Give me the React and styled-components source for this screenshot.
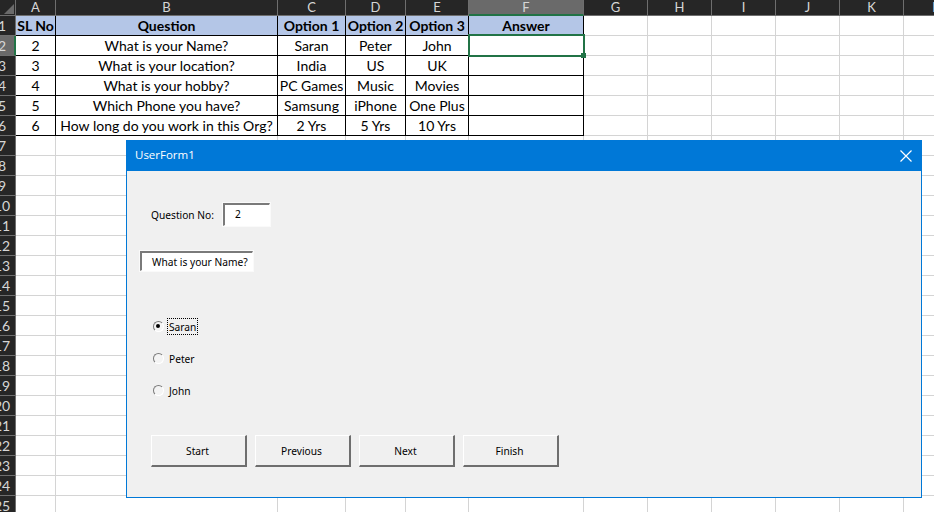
import styled, { createGlobalStyle } from "styled-components";

const columns = ["A", "B", "C", "D", "E", "F", "G", "H", "I", "J", "K", "L"];
const headers = ["SL No", "Question", "Option 1", "Option 2", "Option 3", "Answer"];
const rows = [
  ["2", "What is your Name?", "Saran", "Peter", "John", ""],
  ["3", "What is your location?", "India", "US", "UK", ""],
  ["4", "What is your hobby?", "PC Games", "Music", "Movies", ""],
  ["5", "Which Phone you have?", "Samsung", "iPhone", "One Plus", ""],
  ["6", "How long do you work in this Org?", "2 Yrs", "5 Yrs", "10 Yrs", ""],
];
const totalRows = 25;
const buttons = ["Start", "Previous", "Next", "Finish"];
const options = ["Saran", "Peter", "John"];

const App = () => {
  const blank = columns.length - 6;

  return (
    <Page>
      <GlobalStyle />
      <Sheet>
        <Corner>
          <CornerMark />
        </Corner>
        {columns.map((col) => (
          <ColHead key={col} $active={col === "F"}>
            {col}
          </ColHead>
        ))}

        {Array.from({ length: totalRows }, (_, r) => (
          <RowCells key={r}>
            <RowHead $active={r === 1}>
              <span>{r + 1}</span>
            </RowHead>
            {r === 0 &&
              headers.map((h) => <TitleCell key={h}>{h}</TitleCell>)}
            {r > 0 &&
              r <= rows.length &&
              rows[r - 1].map((value, i) => (
                <DataCell key={i} $selected={r === 1 && i === 5}>
                  <CellText>{value}</CellText>
                  {r === 1 && i === 5 && <FillHandle />}
                </DataCell>
              ))}
            {r > rows.length &&
              columns.slice(0, 6).map((c) => <EmptyCell key={c} />)}
            {Array.from({ length: blank }, (_, i) => (
              <EmptyCell key={i} />
            ))}
          </RowCells>
        ))}
      </Sheet>

      <Dialog>
        <TitleBar>
          <TitleText>UserForm1</TitleText>
          <CloseIcon viewBox="0 0 12 12">
            <path d="M0.5 0.5 L11.5 11.5 M11.5 0.5 L0.5 11.5" />
          </CloseIcon>
        </TitleBar>
        <DialogBody>
          <QuestionRow>
            <FormLabel>Question No:</FormLabel>
            <NumberBox>2</NumberBox>
          </QuestionRow>
          <QuestionBox>What is your Name?</QuestionBox>
          <OptionList>
            {options.map((o, i) => (
              <OptionRow key={o}>
                <Radio $checked={i === 0} />
                <OptionLabel $focused={i === 0}>{o}</OptionLabel>
              </OptionRow>
            ))}
          </OptionList>
          <ButtonRow>
            {buttons.map((b) => (
              <FormButton key={b}>{b}</FormButton>
            ))}
          </ButtonRow>
        </DialogBody>
      </Dialog>
    </Page>
  );
};

const GlobalStyle = createGlobalStyle`
  html, body {
    margin: 0;
    padding: 0;
    background: #fff;
  }
`;

const Page = styled.div`
  position: relative;
  width: 934px;
  height: 512px;
  overflow: hidden;
  font-family: "Lato", "Liberation Sans", sans-serif;
`;

const Sheet = styled.div`
  display: grid;
  grid-template-columns: 16px 40px 222px 68px 60px 63px 115px 64px 64px 64px 64px 64px 64px;
  grid-auto-rows: 20px;
  grid-template-rows: 16px;
  width: 1000px;
`;

const RowCells = styled.div`
  display: contents;
`;

const Corner = styled.div`
  position: relative;
  background: #262626;
  border-right: 1px solid #6e6e6e;
  border-bottom: 1px solid #6e6e6e;
  box-sizing: border-box;
`;

const CornerMark = styled.div`
  position: absolute;
  right: 1px;
  bottom: 1px;
  width: 0;
  height: 0;
  border-left: 10px solid transparent;
  border-bottom: 10px solid #6a6a6a;
`;

const ColHead = styled.div`
  box-sizing: border-box;
  display: flex;
  align-items: center;
  justify-content: center;
  font-size: 13px;
  line-height: 1;
  color: #d6d6d6;
  background: ${(p) => (p.$active ? "#6a6a6a" : "#262626")};
  border-right: 1px solid #6e6e6e;
  border-bottom: ${(p) => (p.$active ? "2px solid #217346" : "1px solid #6e6e6e")};
`;

const RowHead = styled.div`
  box-sizing: border-box;
  display: flex;
  align-items: center;
  justify-content: center;
  overflow: hidden;
  font-size: 14px;
  line-height: 1;
  color: #d6d6d6;
  background: ${(p) => (p.$active ? "#6a6a6a" : "#262626")};
  border-right: ${(p) => (p.$active ? "2px solid #217346" : "1px solid #6e6e6e")};
  border-bottom: 1px solid #6e6e6e;
  padding-right: ${(p) => (p.$active ? "10px" : "11px")};

  span {
    flex-shrink: 0;
  }
`;

const TitleCell = styled.div`
  box-sizing: border-box;
  display: flex;
  align-items: center;
  justify-content: center;
  white-space: nowrap;
  font-size: 14px;
  font-weight: 700;
  color: #000;
  background: #b4c6e7;
  border-right: 1px solid #000;
  border-bottom: 1px solid #000;
`;

const DataCell = styled.div`
  position: relative;
  z-index: ${(p) => (p.$selected ? 1 : "auto")};
  box-sizing: border-box;
  display: flex;
  align-items: center;
  justify-content: center;
  white-space: nowrap;
  font-size: 14px;
  color: #000;
  background: #fff;
  border-right: 1px solid #000;
  border-bottom: 1px solid #000;

  ${(p) =>
    p.$selected &&
    `
    &::after {
      content: "";
      position: absolute;
      left: -1px;
      top: -2px;
      right: -2px;
      bottom: -2px;
      border: 2px solid #217346;
    }
  `}
`;

const CellText = styled.span``;

const FillHandle = styled.div`
  position: absolute;
  right: -3px;
  bottom: -3px;
  width: 5px;
  height: 5px;
  background: #217346;
  z-index: 1;
`;

const EmptyCell = styled.div`
  box-sizing: border-box;
  background: #fff;
  border-right: 1px solid #d4d4d4;
  border-bottom: 1px solid #d4d4d4;
`;

const Dialog = styled.div`
  position: absolute;
  z-index: 2;
  left: 126px;
  top: 140px;
  width: 796px;
  height: 358px;
  box-sizing: border-box;
  display: flex;
  flex-direction: column;
  border: 1px solid #0078d7;
  background: #f0f0f0;
`;

const TitleBar = styled.div`
  display: flex;
  align-items: center;
  justify-content: space-between;
  height: 30px;
  flex-shrink: 0;
  padding: 0 9px 0 8px;
  background: #0078d7;
  color: #fff;
  font-family: "Open Sans", "Noto Sans", sans-serif;
  font-size: 11.5px;
`;

const TitleText = styled.span`
  margin-bottom: 3px;
`;

const CloseIcon = styled.svg`
  width: 12px;
  height: 12px;
  margin-bottom: 1px;
  fill: none;
  stroke: #fff;
  stroke-width: 1.2;
`;

const DialogBody = styled.div`
  display: flex;
  flex-direction: column;
  flex: 1;
  padding: 32px 0 0 13px;
  font-family: "Noto Sans", "Liberation Sans", sans-serif;
  font-size: 10.2px;
  color: #000;
`;

const QuestionRow = styled.div`
  display: flex;
  align-items: center;
  height: 23px;
  padding-left: 11px;
`;

const FormLabel = styled.span`
  width: 72px;
`;

const sunken = `
  box-sizing: border-box;
  background: #fff;
  border-style: solid;
  border-width: 2px 1px 1px 2px;
  border-color: #7a7a7a #fff #fff #7a7a7a;
  outline: 1px solid #fafafa;
`;

const NumberBox = styled.div`
  ${sunken}
  width: 47px;
  height: 23px;
  padding: 2px 0 0 10px;
`;

const QuestionBox = styled.div`
  ${sunken}
  width: 113px;
  height: 20px;
  margin-top: 25px;
  padding: 2px 0 0 10px;
  white-space: nowrap;
`;

const OptionList = styled.div`
  display: flex;
  flex-direction: column;
  gap: 12px;
  margin-top: 45px;
  padding-left: 13px;
`;

const OptionRow = styled.div`
  display: flex;
  align-items: center;
  height: 20px;
  gap: 4px;
`;

const Radio = styled.div`
  position: relative;
  box-sizing: border-box;
  width: 11px;
  height: 11px;
  border-radius: 50%;
  border: 1.5px solid;
  border-color: #7a7a7a #fff #fff #7a7a7a;
  background: #f4f4f4;

  ${(p) =>
    p.$checked &&
    `
    &::after {
      content: "";
      position: absolute;
      left: 2px;
      top: 2px;
      width: 4px;
      height: 4px;
      border-radius: 50%;
      background: #000;
    }
  `}
`;

const OptionLabel = styled.span`
  padding: 1px 1px 0;
  outline: ${(p) => (p.$focused ? "1px dotted #000" : "none")};
`;

const ButtonRow = styled.div`
  display: flex;
  gap: 8px;
  margin-top: 35px;
  padding-left: 11px;
`;

const FormButton = styled.div`
  box-sizing: border-box;
  display: flex;
  align-items: center;
  justify-content: center;
  width: 96px;
  height: 32px;
  padding-right: 2px;
  background: #f0f0f0;
  border-style: solid;
  border-width: 1px 2px 2px 1px;
  border-color: #fff #6e6e6e #6e6e6e #fff;
`;

export default App;
